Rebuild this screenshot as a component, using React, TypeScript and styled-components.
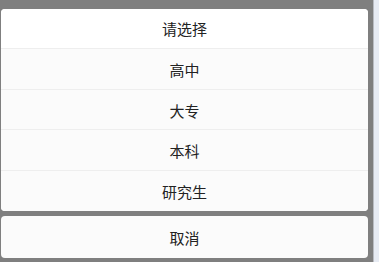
import styled, { createGlobalStyle } from "styled-components";

const Global = createGlobalStyle`
  html, body {
    margin: 0;
    padding: 0;
    background: #7f7f7f;
    font-family: "Noto Sans CJK SC", "Noto Sans", sans-serif;
  }
`;

const Screen = styled.div`
  width: 379px;
  height: 262px;
  display: flex;
  overflow: hidden;
`;

const Overlay = styled.div`
  width: 373px;
  box-sizing: border-box;
  padding: 9px 5px 0 1px;
  display: flex;
  flex-direction: column;
  gap: 5px;
`;

const Strip = styled.div`
  flex: 1;
  background: #e7ebf3;
  border-left: 1px solid #b9bcc2;
`;

const Sheet = styled.div`
  background: #fbfbfb;
  border-radius: 4px;
  overflow: hidden;
  display: flex;
  flex-direction: column;
`;

const Row = styled.div<{ $title?: boolean }>`
  height: ${(p) => (p.$title ? "40px" : "40.5px")};
  box-sizing: border-box;
  padding-top: ${(p) => (p.$title ? "0" : "2px")};
  display: flex;
  align-items: center;
  justify-content: center;
  font-size: 15px;
  color: #222;
  background: ${(p) => (p.$title ? "#ffffff" : "#fbfbfb")};
  border-bottom: 1px solid #eeeeee;
  &:last-child {
    border-bottom: none;
  }
`;

const Cancel = styled.div`
  height: 42px;
  background: #fbfbfb;
  border-radius: 4px;
  display: flex;
  align-items: center;
  justify-content: center;
  font-size: 15px;
  color: #222;
`;

const options = ["高中", "大专", "本科", "研究生"];

export default function App() {
  return (
    <>
      <Global />
      <Screen>
        <Overlay>
          <Sheet>
            <Row $title>请选择</Row>
            {options.map((o) => (
              <Row key={o}>{o}</Row>
            ))}
          </Sheet>
          <Cancel>取消</Cancel>
        </Overlay>
        <Strip />
      </Screen>
    </>
  );
}
